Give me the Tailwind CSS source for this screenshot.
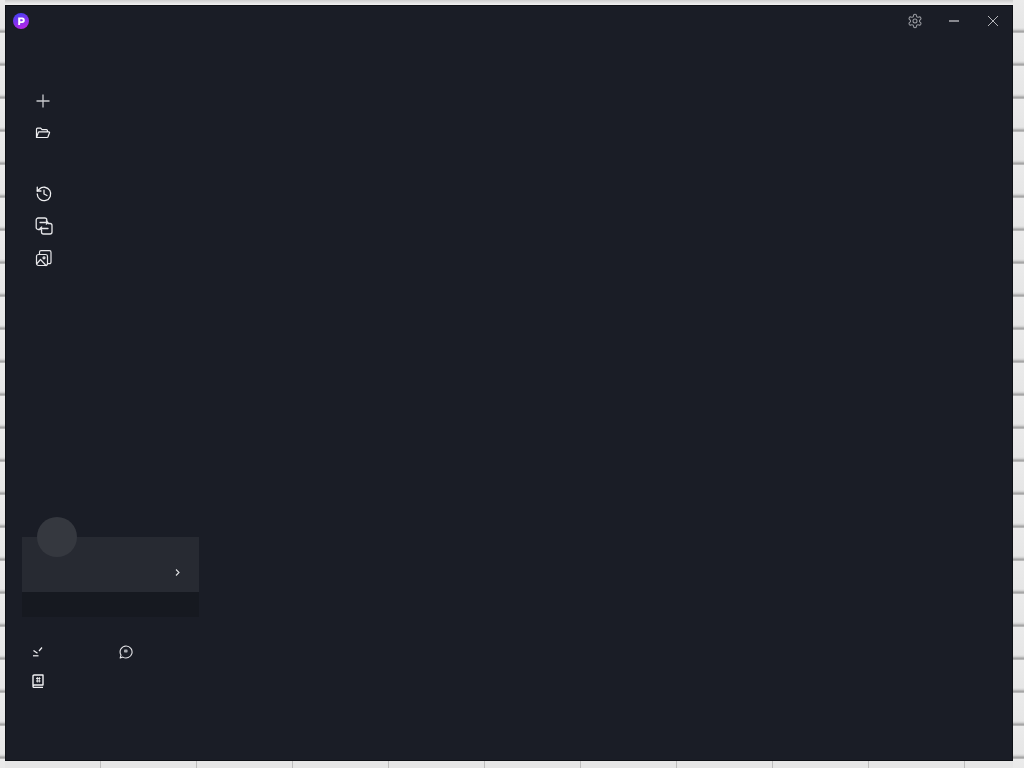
<!DOCTYPE html>
<html lang="en">
  <head>
    <meta charset="UTF-8" />
    <title>App</title>
    <script src="https://cdn.jsdelivr.net/npm/@tailwindcss/browser@4"></script>
  </head>
  <body class="overflow-hidden">
    <!-- wall behind the window -->
    <div class="h-[768px] w-[1024px] pl-[5px] bg-[#e9e9e9] bg-[repeating-linear-gradient(180deg,#ebebeb_0,#e6e6e6_28px,#cdcdcd_30px,#a6a6a6_31px,#a6a6a6_32px,#cdcdcd_33px)]">
      <div class="h-[5px] w-[1008px] bg-[linear-gradient(180deg,#cfcfcf,#f3f3f3)]"></div>
      <div class="h-[756px] w-[1008px] border border-[#0e1015] bg-[#1a1d26]">
        <!-- title bar -->
        <div class="flex h-[30px] items-center justify-between">
          <svg class="ml-[7px] h-4 w-4" viewBox="0 0 16 16">
            <defs>
              <linearGradient id="logo" x1="0" y1="0" x2="0.4" y2="1">
                <stop offset="0" stop-color="#3a44f5" />
                <stop offset="1" stop-color="#b026e8" />
              </linearGradient>
            </defs>
            <circle cx="8" cy="8" r="8" fill="url(#logo)" />
            <path d="M5.200 4.500h3.900a2.700 2.700 0 0 1 0 5.400H7.300l-.3 2H5.200zM7.300 6.200v2h1.500a1 1 0 0 0 0-2z" fill="#fff" />
          </svg>
          <div class="flex items-center">
            <svg class="h-4 w-4" viewBox="0 0 24 24" fill="none" stroke="#9a9ca2" stroke-width="1.6" stroke-linecap="round" stroke-linejoin="round">
              <path d="M12.200 2h-.4a2 2 0 0 0-2 2v.2a2 2 0 0 1-1 1.700l-.4.3a2 2 0 0 1-2 0l-.2-.1a2 2 0 0 0-2.700.7l-.2.4a2 2 0 0 0 .7 2.700l.2.1a2 2 0 0 1 1 1.700v.5a2 2 0 0 1-1 1.800l-.2.1a2 2 0 0 0-.7 2.700l.2.4a2 2 0 0 0 2.700.7l.2-.1a2 2 0 0 1 2 0l.4.3a2 2 0 0 1 1 1.700v.2a2 2 0 0 0 2 2h.4a2 2 0 0 0 2-2v-.2a2 2 0 0 1 1-1.700l.4-.3a2 2 0 0 1 2 0l.2.1a2 2 0 0 0 2.700-.7l.2-.4a2 2 0 0 0-.7-2.700l-.2-.1a2 2 0 0 1-1-1.800v-.5a2 2 0 0 1 1-1.700l.2-.1a2 2 0 0 0 .7-2.700l-.2-.4a2 2 0 0 0-2.700-.7l-.2.1a2 2 0 0 1-2 0l-.4-.3a2 2 0 0 1-1-1.700V4a2 2 0 0 0-2-2z" />
              <circle cx="12" cy="12" r="3" />
            </svg>
            <svg class="ml-[23px] h-4 w-4" viewBox="0 0 16 16" fill="none" stroke="#c4c5c9" stroke-width="1.300">
              <path d="M3 8h10" />
            </svg>
            <svg class="ml-[23px] mr-[11px] h-4 w-4" viewBox="0 0 16 16" fill="none" stroke="#b5b6bb" stroke-width="1">
              <path d="M3 3l10 10M13 3L3 13" />
            </svg>
          </div>
        </div>

        <!-- sidebar -->
        <div class="ml-4 w-[177px]">
          <div class="mt-[49px] pl-[13px]">
            <div class="flex h-8 items-center">
              <svg class="h-4 w-4" viewBox="0 0 16 16" fill="none" stroke="#c9cace" stroke-width="1.300">
                <path d="M8 1.500v13M1.500 8h13" />
              </svg>
            </div>
            <div class="flex h-8 items-center">
              <svg class="h-4 w-4" viewBox="0 0 16 16" fill="none" stroke="#f0f0f2" stroke-width="1.200" stroke-linejoin="round">
                <path d="M1.500 12.500V4.200c0-.6.400-1 1-1h3.200l1.300 1.400h4.400c.6 0 1 .4 1 1v1.300" />
                <path d="M1.500 12.500l1.800-5c.1-.4.500-.6.900-.6h9.600c.6 0 .9.400.7.900l-1.500 4c-.1.400-.5.700-1 .7z" />
              </svg>
            </div>

            <div class="mt-[29px] flex h-8 items-center">
              <svg class="h-[18px] w-[18px]" viewBox="0 0 24 24" fill="none" stroke="#f0f0f2" stroke-width="1.700" stroke-linecap="round" stroke-linejoin="round">
                <path d="M3 12a9 9 0 1 0 2.600-6.400L3 8" />
                <path d="M3 3v5h5" />
                <path d="M12 7v5l4 2" />
              </svg>
            </div>
            <div class="flex h-8 items-center">
              <svg class="h-[18px] w-[18px]" viewBox="0 0 18 18" fill="none" stroke="#e6e6e9" stroke-width="1.300" stroke-linecap="round" stroke-linejoin="round">
                <path d="M5 12.500H3.200a2 2 0 0 1-2-2V3a2 2 0 0 1 2-2h6.600a2 2 0 0 1 2 2v1.500" />
                <path d="M13 6.500h2a2 2 0 0 1 2 2V15a2 2 0 0 1-2 2H8.500a2 2 0 0 1-2-2v-1.500" />
                <path d="M5 5.500h8M11.300 3.900L13 5.500l-1.700 1.600" />
                <path d="M13 11.500H5M6.700 9.900L5 11.500l1.700 1.600" />
              </svg>
            </div>
            <div class="flex h-8 items-center">
              <svg class="h-[18px] w-[18px]" viewBox="0 0 18 18" fill="none" stroke="#e6e6e9" stroke-width="1.200" stroke-linecap="round" stroke-linejoin="round">
                <path d="M4.500 5V3.200a1.500 1.500 0 0 1 1.500-1.500h8.500a1.500 1.500 0 0 1 1.500 1.500v10a1.500 1.500 0 0 1-1.500 1.500H13" />
                <rect x="1.500" y="5.500" width="11" height="11" rx="2" />
                <circle cx="9" cy="8.800" r="1" />
                <path d="M2 14.500l3.500-4 5.500 6" />
              </svg>
            </div>
          </div>

          <!-- account card -->
          <div class="relative mt-[263px]">
            <div class="absolute left-[15px] top-[-20px] h-10 w-10 rounded-full bg-[#35383f]"></div>
            <div class="flex h-[55px] items-end justify-end bg-[#272a32] pb-[15px] pr-[17px]">
              <svg class="h-[9px] w-[9px]" viewBox="0 0 9 9" fill="none" stroke="#e0e0e3" stroke-width="1.100">
                <path d="M3 1.500l3 3-3 3" />
              </svg>
            </div>
            <div class="h-[25px] bg-[#161920]"></div>
          </div>

          <!-- footer links -->
          <div class="mt-[27px] pl-[10px]">
            <div class="flex h-4 items-center">
              <svg class="h-3 w-3" viewBox="0 0 12 12" fill="none" stroke="#f0f0f2" stroke-width="1.200">
                <path d="M1 9.800h5.500" />
                <path d="M1.500 4.500l4 2.800" />
                <path d="M10 1.500L7 5" />
              </svg>
              <svg class="ml-[75px] h-[14px] w-[14px]" viewBox="0 0 14 14" fill="none" stroke="#e6e6e9" stroke-width="1.100" stroke-linejoin="round">
                <path d="M7 1a6 6 0 1 1-3.100 11.100L1.200 13l.8-2.900A6 6 0 0 1 7 1z" />
                <rect x="5" y="4.600" width="3.600" height="3" rx=".8" fill="#a9abb0" stroke="none" />
              </svg>
            </div>
            <div class="mt-[13px] flex h-4 items-center">
              <svg class="h-[14px] w-[12px]" viewBox="0 0 12 14" fill="none" stroke="#f0f0f2" stroke-width="1.400" stroke-linejoin="round">
                <path d="M1 11.500V2.200C1 1.500 1.500 1 2.200 1H11v10H2.200C1.500 11 1 11.500 1 12.200S1.500 13.400 2.200 13.400H11" />
                <path d="M4 4.500h4.500M4 7h4.500M5.300 3v5.500M7.300 3v5.500" stroke-width=".9" />
              </svg>
            </div>
          </div>
        </div>
      </div>
      <!-- bottom strip with brick joints -->
      <div class="h-[7px] w-[1008px] bg-[#e6e6e6] bg-[repeating-linear-gradient(90deg,transparent_0,transparent_95px,#bdbdbd_95px,#bdbdbd_96px)]"></div>
    </div>
  </body>
</html>
